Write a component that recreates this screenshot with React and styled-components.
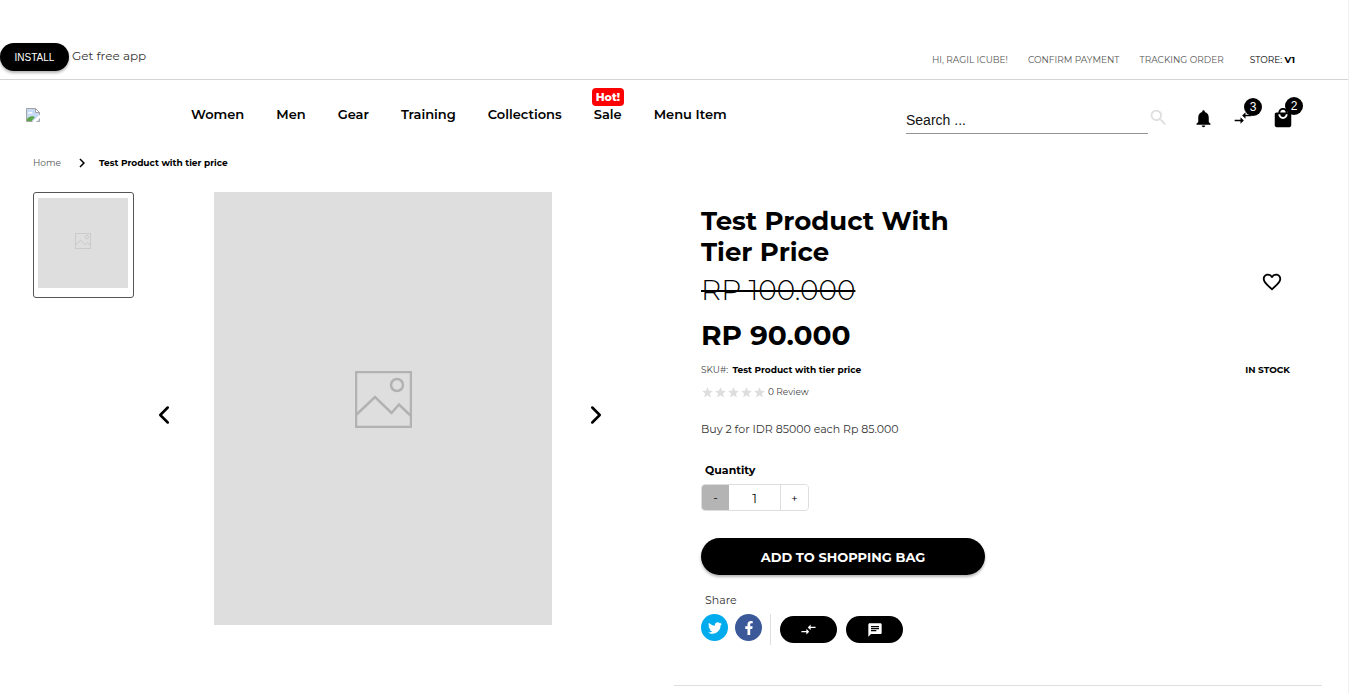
import React, { useState } from 'react';
import styled, { createGlobalStyle } from 'styled-components';
import {
  MdChat,
  MdChevronRight,
  MdCompareArrows,
  MdFavoriteBorder,
  MdLocalMall,
  MdNotifications,
  MdSearch,
  MdStar,
} from 'react-icons/md';
import { FaFacebookF, FaTwitter } from 'react-icons/fa';
import { ChevronLeft, ChevronRight } from 'lucide-react';

const menu = [
  { label: 'Women' },
  { label: 'Men' },
  { label: 'Gear' },
  { label: 'Training' },
  { label: 'Collections' },
  { label: 'Sale', tag: 'Hot!' },
  { label: 'Menu Item' },
];

const PlaceholderIcon = ({ size, color, stroke }) => (
  <svg width={size} height={size} viewBox="0 0 57 57" fill="none" stroke={color} strokeWidth={stroke}>
    <rect x="1" y="1" width="55" height="55" />
    <circle cx="42" cy="14" r="6" />
    <path d="M1 44 20 26 36.5 42 44 33.5 56 45" />
  </svg>
);

const BrokenImage = () => (
  <svg width="14" height="14" viewBox="0 0 14 14">
    <path d="M.5 .5H9.5L13.5 4.5V13.5H.5Z" fill="#c6d9f5" stroke="#a3a3a3" />
    <path d="M9.5 .5V4.5H13.5Z" fill="#fff" stroke="#a3a3a3" />
    <path d="M2 5.5a1.5 1.5 0 0 1 2-1.4 1.6 1.6 0 0 1 2.6 1.4z" fill="#fff" />
    <path d="M1 13V11C3 8.5 6 7.5 9 9L5.5 13Z" fill="#5aa544" />
    <path d="M6 14 14 6.5V10L10 14Z" fill="#fff" />
  </svg>
);

const App = () => {
  const [qty, setQty] = useState(1);

  return (
    <Page>
      <GlobalStyle />
      <TopBar>
        <Install>
          <InstallButton type="button">INSTALL</InstallButton>
          <span>Get free app</span>
        </Install>
        <TopLinks>
          <a href="#">HI, RAGIL ICUBE!</a>
          <a href="#">CONFIRM PAYMENT</a>
          <a href="#">TRACKING ORDER</a>
          <Store>STORE: <b>V1</b></Store>
        </TopLinks>
      </TopBar>

      <Header>
        <Logo href="#" aria-label="Home page"><BrokenImage /></Logo>
        <Nav>
          {menu.map((item) => (
            <NavLink href="#" key={item.label}>
              {item.tag && <Tag>{item.tag}</Tag>}
              {item.label}
            </NavLink>
          ))}
        </Nav>
        <Search>
          <SearchInput type="text" aria-label="Search" placeholder="Search ..." />
          <IconButton type="button" aria-label="Submit search" $color="#dedede"><MdSearch size={21} /></IconButton>
        </Search>
        <Tools>
          <IconButton type="button" aria-label="Notifications"><MdNotifications size={21} /></IconButton>
          <IconButton type="button" aria-label="Compare">
            <MdCompareArrows size={20} />
            <Badge>3</Badge>
          </IconButton>
          <IconButton type="button" aria-label="Shopping bag">
            <MdLocalMall size={22} />
            <Badge>2</Badge>
          </IconButton>
        </Tools>
      </Header>

      <Breadcrumb>
        <a href="#">Home</a>
        <MdChevronRight size={18} color="#000" />
        <strong>Test Product with tier price</strong>
      </Breadcrumb>

      <Product>
        <Gallery>
          <Thumb type="button" aria-label="Product image 1">
            <ThumbImage><PlaceholderIcon size={16} color="#c4c4c4" stroke={3} /></ThumbImage>
          </Thumb>
          <Slider>
            <SlideButton type="button" aria-label="Previous"><ChevronLeft size={30} /></SlideButton>
            <MainImage><PlaceholderIcon size={57} color="#b2b2b2" stroke={2.5} /></MainImage>
            <SlideButton type="button" aria-label="Next"><ChevronRight size={30} /></SlideButton>
          </Slider>
        </Gallery>

        <Info>
          <Head>
            <div>
              <Title>Test Product With Tier Price</Title>
              <OldPrice>RP 100.000</OldPrice>
              <Price>RP 90.000</Price>
            </div>
            <IconButton type="button" aria-label="Add to wishlist"><MdFavoriteBorder size={22} /></IconButton>
          </Head>

          <SkuRow>
            <Sku>SKU#: <b>Test Product with tier price</b></Sku>
            <b>IN STOCK</b>
          </SkuRow>
          <Rating>
            <Stars>
              {[1, 2, 3, 4, 5].map((n) => <MdStar key={n} size={13} />)}
            </Stars>
            <span>0 Review</span>
          </Rating>
          <TierPrice>Buy 2 for IDR 85000 each Rp 85.000</TierPrice>

          <QtyLabel htmlFor="qty">Quantity</QtyLabel>
          <Stepper>
            <StepButton type="button" $muted={qty <= 1} onClick={() => setQty(Math.max(1, qty - 1))}>-</StepButton>
            <QtyInput id="qty" type="text" value={qty} onChange={(e) => setQty(Number(e.target.value) || 1)} />
            <StepButton type="button" onClick={() => setQty(qty + 1)}>+</StepButton>
          </Stepper>

          <AddButton type="button">ADD TO SHOPPING BAG</AddButton>

          <ShareLabel>Share</ShareLabel>
          <ShareRow>
            <Social>
              <SocialButton type="button" aria-label="Share on Twitter" $bg="#00aced"><FaTwitter size={14} /></SocialButton>
              <SocialButton type="button" aria-label="Share on Facebook" $bg="#3b5998"><FaFacebookF size={14} /></SocialButton>
            </Social>
            <Pill type="button" aria-label="Compare product"><MdCompareArrows size={17} /></Pill>
            <Pill type="button" aria-label="Chat"><MdChat size={16} /></Pill>
          </ShareRow>
        </Info>
      </Product>
    </Page>
  );
};

const GlobalStyle = createGlobalStyle`
  *, *::before, *::after {
    box-sizing: border-box;
  }

  body {
    margin: 0;
    background: #fff;
    color: #000;
    font-family: Montserrat, Inter, sans-serif;
    overflow-x: hidden;
  }

  button, input {
    font-family: inherit;
    color: inherit;
    padding: 0;
    margin: 0;
  }

  a {
    color: inherit;
    text-decoration: none;
  }

  svg {
    display: block;
    flex-shrink: 0;
  }
`;

const Page = styled.div`
  min-height: 100vh;
  padding-top: 43px;
  border-right: 1px solid #f0f0f0;
`;

const TopBar = styled.div`
  display: flex;
  justify-content: space-between;
  border-bottom: 1px solid #d4d4d4;
  padding-bottom: 8px;
`;

const Install = styled.div`
  display: flex;
  gap: 3px;
  font-size: 12px;
  font-weight: 400;
  line-height: 26px;
  color: #333;
`;

const InstallButton = styled.button`
  width: 69px;
  height: 28px;
  border: 0;
  border-radius: 14px;
  background: #000;
  color: #fff;
  font-family: 'Liberation Sans', Arial, sans-serif;
  font-size: 10px;
  box-shadow: 0 2px 3px rgba(0, 0, 0, 0.3);
`;

const TopLinks = styled.nav`
  display: flex;
  gap: 20px;
  padding: 7px 53px 0 0;
  font-size: 9px;
  font-weight: 400;
  line-height: 20px;
  color: #555;
`;

const Store = styled.span`
  padding-left: 6px;
  font-weight: 400;
  color: #000;

  b {
    font-weight: 700;
  }
`;

const Header = styled.header`
  display: flex;
  align-items: flex-start;
  padding: 14px 54px 0 26px;
`;

const Logo = styled.a`
  width: 165px;
  padding-top: 14px;
`;

const Nav = styled.nav`
  display: flex;
  flex: 1;
  gap: 32px;
  padding-top: 10px;
`;

const NavLink = styled.a`
  position: relative;
  font-size: 13px;
  font-weight: 600;
  line-height: 20px;
  white-space: nowrap;
`;

const Tag = styled.span`
  position: absolute;
  left: -2px;
  bottom: 18px;
  padding: 0 4px;
  border-radius: 4px;
  background: #f00;
  color: #fff;
  font-size: 11px;
  font-weight: 800;
  line-height: 18px;
`;

const Search = styled.form`
  display: flex;
  align-items: flex-start;
  padding-top: 13px;
`;

const SearchInput = styled.input`
  width: 242px;
  height: 27px;
  border: 0;
  border-bottom: 1px solid #949494;
  font-family: 'Liberation Sans', Arial, sans-serif;
  font-size: 14px;
  outline: none;

  &::placeholder {
    color: #111;
    opacity: 1;
  }
`;

const IconButton = styled.button`
  position: relative;
  display: flex;
  align-items: center;
  justify-content: center;
  border: 0;
  background: none;
  color: ${(props) => props.$color || '#000'};
  cursor: pointer;
`;

const Tools = styled.div`
  display: flex;
  align-items: center;
  gap: 19px;
  padding: 13px 0 0 24px;
`;

const Badge = styled.span`
  position: absolute;
  top: -10px;
  right: -9px;
  width: 18px;
  height: 18px;
  border-radius: 50%;
  background: #000;
  color: #fff;
  font-family: 'Liberation Sans', Arial, sans-serif;
  font-size: 12px;
  line-height: 18px;
  text-align: center;
`;

const Breadcrumb = styled.nav`
  display: flex;
  align-items: center;
  gap: 8px;
  padding: 19px 33px 0;
  font-size: 9px;
  line-height: 20px;
  color: #555;

  a {
    margin-right: 4px;
  }

  strong {
    font-weight: 700;
    color: #000;
  }
`;

const Product = styled.main`
  display: grid;
  grid-template-columns: 1fr 1fr;
  padding: 19px 26px 0;
`;

const Gallery = styled.section`
  display: flex;
  align-items: flex-start;
  padding: 0 60px 0 7px;
`;

const Thumb = styled.button`
  flex-shrink: 0;
  width: 101px;
  padding: 5px 5px 9px 4px;
  border: 1px solid #555;
  border-radius: 3px;
  background: #fff;
`;

const ThumbImage = styled.span`
  display: flex;
  align-items: center;
  justify-content: center;
  aspect-ratio: 1;
  padding-bottom: 4px;
  background: #dedede;
`;

const Slider = styled.div`
  flex: 1;
  display: grid;
  grid-template-columns: 36px 1fr 36px;
  align-items: center;
  margin-left: 12px;
`;

const SlideButton = styled(IconButton)`
  padding-top: 13px;
`;

const MainImage = styled.div`
  display: flex;
  align-items: center;
  justify-content: center;
  aspect-ratio: 338 / 433;
  margin: 0 26px 0 32px;
  padding-bottom: 18px;
  background: #dedede;
`;

const Info = styled.section`
  padding: 14px 32px 40px 27px;
  border-bottom: 1px solid #dedede;
`;

const Head = styled.div`
  display: flex;
  align-items: center;
  justify-content: space-between;
  padding-right: 7px;
`;

const Title = styled.h1`
  max-width: 284px;
  margin: 0;
  font-size: 26px;
  font-weight: 700;
  line-height: 31px;
`;

const OldPrice = styled.div`
  font-size: 28px;
  font-weight: 300;
  line-height: 44px;
  text-decoration: line-through;
`;

const Price = styled.div`
  font-size: 28px;
  font-weight: 700;
  line-height: 46px;
`;

const SkuRow = styled.div`
  display: flex;
  justify-content: space-between;
  font-size: 9px;
  line-height: 24px;
  color: #444;

  b {
    font-weight: 700;
    color: #000;
  }
`;

const Sku = styled.span`
  b {
    margin-left: 2px;
  }
`;

const Rating = styled.div`
  display: flex;
  align-items: center;
  gap: 2px;
  font-size: 9px;
  line-height: 20px;
  color: #444;
`;

const Stars = styled.span`
  display: flex;
  color: #dedede;
`;

const TierPrice = styled.p`
  margin: 17px 0 21px;
  font-size: 11px;
  font-weight: 400;
  line-height: 20px;
  color: #333;
`;

const QtyLabel = styled.label`
  display: block;
  margin-left: 4px;
  font-size: 11px;
  font-weight: 700;
  line-height: 20px;
`;

const Stepper = styled.div`
  display: flex;
  width: 108px;
  height: 27px;
  margin: 4px 0 27px;
  border: 1px solid #dedede;
  border-radius: 4px;
  overflow: hidden;
`;

const StepButton = styled.button`
  width: 27px;
  border: 0;
  background: ${(props) => (props.$muted ? '#b4b4b4' : '#fff')};
  font-size: 12px;
  cursor: pointer;
`;

const QtyInput = styled.input`
  flex: 1;
  min-width: 0;
  border: 0;
  border-right: 1px solid #dedede;
  font-size: 13px;
  text-align: center;
`;

const AddButton = styled.button`
  display: block;
  width: 284px;
  height: 37px;
  border: 0;
  border-radius: 19px;
  background: #000;
  color: #fff;
  font-size: 13px;
  font-weight: 700;
  box-shadow: 0 2px 3px rgba(0, 0, 0, 0.3);
  cursor: pointer;
`;

const ShareLabel = styled.div`
  margin: 15px 0 4px 4px;
  font-size: 11px;
  font-weight: 400;
  line-height: 20px;
  color: #333;
`;

const ShareRow = styled.div`
  display: flex;
  align-items: center;
  gap: 9px;
`;

const Social = styled.div`
  display: flex;
  gap: 7px;
  height: 31px;
  padding-right: 8px;
  border-right: 1px solid #dedede;
`;

const SocialButton = styled.button`
  display: flex;
  align-items: center;
  justify-content: center;
  width: 27px;
  height: 27px;
  border: 0;
  border-radius: 50%;
  background: ${(props) => props.$bg};
  color: #fff;
  cursor: pointer;
`;

const Pill = styled.button`
  display: flex;
  align-items: center;
  justify-content: center;
  width: 57px;
  height: 27px;
  border: 0;
  border-radius: 14px;
  background: #000;
  color: #fff;
  cursor: pointer;
`;

export default App;
